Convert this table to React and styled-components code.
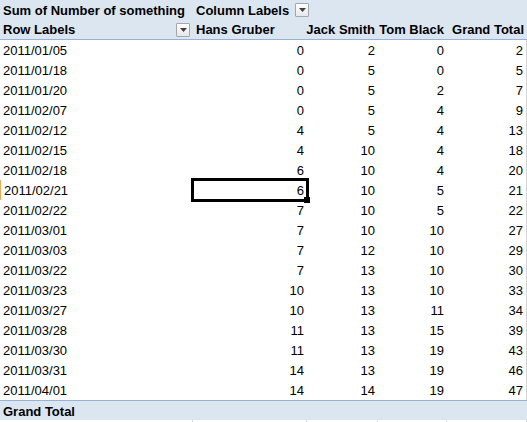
import styled, {createGlobalStyle} from 'styled-components';

const GlobalStyle = createGlobalStyle`
  html, body {
    margin: 0;
    padding: 0;
    background: #ffffff;
  }
  body {
    font-family: 'Liberation Sans', Arial, sans-serif;
    font-size: 13px;
    color: #000000;
  }
`;

const rows = [
  ['2011/01/05', 0, 2, 0, 2],
  ['2011/01/18', 0, 5, 0, 5],
  ['2011/01/20', 0, 5, 2, 7],
  ['2011/02/07', 0, 5, 4, 9],
  ['2011/02/12', 4, 5, 4, 13],
  ['2011/02/15', 4, 10, 4, 18],
  ['2011/02/18', 6, 10, 4, 20],
  ['2011/02/21', 6, 10, 5, 21],
  ['2011/02/22', 7, 10, 5, 22],
  ['2011/03/01', 7, 10, 10, 27],
  ['2011/03/03', 7, 12, 10, 29],
  ['2011/03/22', 7, 13, 10, 30],
  ['2011/03/23', 10, 13, 10, 33],
  ['2011/03/27', 10, 13, 11, 34],
  ['2011/03/28', 11, 13, 15, 39],
  ['2011/03/30', 11, 13, 19, 43],
  ['2011/03/31', 14, 13, 19, 46],
  ['2011/04/01', 14, 14, 19, 47],
];

const SELECTED = 7;

const DropButton = () => (
  <Drop>
    <svg width='7' height='4' viewBox='0 0 7 4'>
      <path d='M0 0 H7 L3.5 4 Z' fill='#404040' />
    </svg>
  </Drop>
);

const App = () => {
  return (
    <>
      <GlobalStyle />
      <Sheet>
        <HeadCell $bold>Sum of Number of something</HeadCell>
        <HeadCell $bold $span={4}>
          Column Labels <DropButton />
        </HeadCell>

        <HeadCell $bold $last>
          <span>Row Labels</span>
          <DropButton />
        </HeadCell>
        <HeadCell $bold $last>Hans Gruber</HeadCell>
        <HeadCell $bold $last $right>Jack Smith</HeadCell>
        <HeadCell $bold $last $right>Tom Black</HeadCell>
        <HeadCell $bold $last $right>Grand Total</HeadCell>

        {rows.map((r, i) => (
          <Row key={r[0]}>
            <Cell $marked={i === SELECTED}>{r[0]}</Cell>
            <Cell $right $selected={i === SELECTED}>
              {r[1]}
              {i === SELECTED && <Handle />}
            </Cell>
            <Cell $right>{r[2]}</Cell>
            <Cell $right>{r[3]}</Cell>
            <Cell $right $edge>{r[4]}</Cell>
          </Row>
        ))}

        <TotalCell $bold>Grand Total</TotalCell>
        <TotalCell />
        <TotalCell />
        <TotalCell />
        <TotalCell />

        <Gap />
        <Gap />
        <Gap />
        <Gap />
        <Gap />
      </Sheet>
    </>
  );
};

export default App;

const Sheet = styled.div`
  display: grid;
  grid-template-columns: 193px 114px 71px 69px 80px;
  grid-auto-rows: 20px;
  width: 527px;
  height: 422px;
  overflow: hidden;
`;

const Row = styled.div`
  display: contents;
`;

const HeadCell = styled.div`
  grid-column: span ${(p) => p.$span || 1};
  display: flex;
  align-items: center;
  justify-content: ${(p) => (p.$right ? 'flex-end' : 'space-between')};
  gap: 4px;
  padding: 0 3px;
  background: #dce6f1;
  font-weight: ${(p) => (p.$bold ? 700 : 400)};
  white-space: nowrap;
  border-bottom: ${(p) => (p.$last ? '1px solid #95b3d7' : 'none')};
  box-sizing: border-box;

  &:nth-child(2) {
    justify-content: flex-start;
  }
`;

const Drop = styled.span`
  display: inline-flex;
  align-items: center;
  justify-content: center;
  width: 14px;
  height: 14px;
  margin-left: 2px;
  border: 1px solid #a6a6a6;
  border-radius: 1px;
  background: linear-gradient(#ffffff, #e4e7ec);
  box-sizing: border-box;
  flex-shrink: 0;
`;

const Cell = styled.div`
  position: relative;
  display: flex;
  align-items: center;
  justify-content: ${(p) => (p.$right ? 'flex-end' : 'flex-start')};
  padding: 0 3px;
  background: #ffffff;
  white-space: nowrap;
  box-sizing: border-box;
  border-left: ${(p) => (p.$marked ? '1px solid #f2a94e' : 'none')};
  border-right: ${(p) => (p.$edge ? '1px solid #d4d4d4' : 'none')};
  outline: ${(p) => (p.$selected ? '3px solid #000000' : 'none')};
  outline-offset: -1px;
  z-index: ${(p) => (p.$selected ? 1 : 0)};
`;

const Handle = styled.span`
  position: absolute;
  right: -4px;
  bottom: -4px;
  width: 6px;
  height: 6px;
  background: #000000;
  border: 1px solid #ffffff;
  border-top: none;
  border-left: none;
`;

const TotalCell = styled.div`
  display: flex;
  align-items: center;
  padding: 0 3px;
  background: #dce6f1;
  border-top: 1px solid #95b3d7;
  font-weight: ${(p) => (p.$bold ? 700 : 400)};
  white-space: nowrap;
  box-sizing: border-box;
  height: 21px;
`;

const Gap = styled.div`
  background: #ffffff;
  border-right: 1px solid #d4d4d4;
`;
